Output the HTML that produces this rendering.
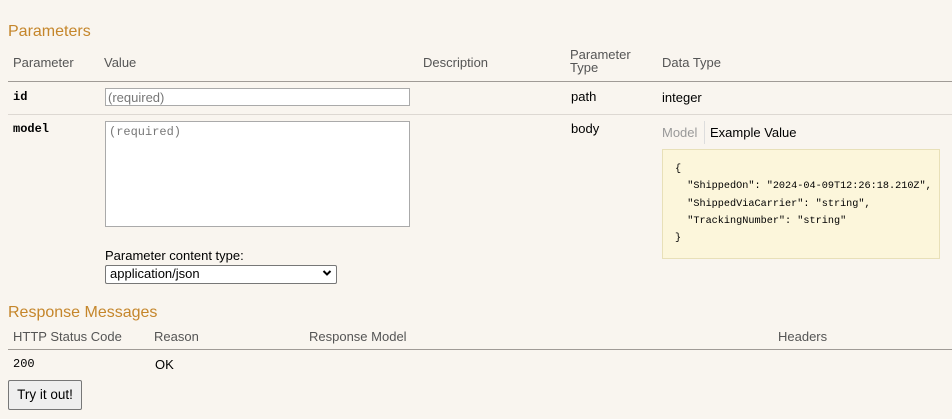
<!DOCTYPE html>
<html><head><style>
body{margin:0;width:952px;height:419px;background:#f9f5ef;font-family:"Liberation Sans",sans-serif;font-size:13px;color:#000;position:relative;overflow:hidden}
.a{position:absolute;white-space:nowrap}
.h{color:#c5862b;font-size:16px}
.th{color:#555;font-size:13px}
.mono{font-family:"Liberation Mono",monospace;font-size:12px}
.line{position:absolute;left:8px;right:0;height:1px}
</style></head><body>
<div class="a h" style="left:8px;top:23px">Parameters</div>
<div class="a th" style="left:13px;top:55px">Parameter</div>
<div class="a th" style="left:104px;top:55px">Value</div>
<div class="a th" style="left:423px;top:55px">Description</div>
<div class="a th" style="left:570px;top:48px;line-height:13px">Parameter<br>Type</div>
<div class="a th" style="left:662px;top:55px">Data Type</div>
<div class="line" style="top:81px;background:#a09b96"></div>

<div class="a mono" style="left:13px;top:90px;font-weight:bold">id</div>
<div class="a" style="left:105px;top:88px;width:303px;height:16px;border:1px solid #aaa;background:#fff"></div>
<div class="a" style="left:108px;top:90px;color:#777">(required)</div>
<div class="a" style="left:571px;top:89px">path</div>
<div class="a" style="left:662px;top:90px">integer</div>
<div class="line" style="top:114px;background:#ddd8d2"></div>

<div class="a mono" style="left:13px;top:122px;font-weight:bold">model</div>
<div class="a" style="left:105px;top:121px;width:303px;height:104px;border:1px solid #aaa;background:#fff"></div>
<div class="a mono" style="left:109px;top:125px;color:#777">(required)</div>
<div class="a" style="left:571px;top:121px">body</div>
<div class="a" style="left:662px;top:125px;color:#999">Model</div>
<div class="a" style="left:704px;top:121px;width:1px;height:23px;background:#ddd"></div>
<div class="a" style="left:710px;top:125px">Example Value</div>
<div class="a" style="left:662px;top:149px;width:276px;height:108px;border:1px solid #e8e0b8;background:#fcf6db"></div>
<pre class="a mono" style="left:675px;top:161px;margin:0;font-size:10.2px;line-height:17.3px;white-space:pre">{
  "ShippedOn": "2024-04-09T12:26:18.210Z",
  "ShippedViaCarrier": "string",
  "TrackingNumber": "string"
}</pre>

<div class="a" style="left:105px;top:248px">Parameter content type:</div>
<div class="a" style="left:105px;top:265px;width:230px;height:17px;border:1px solid #777;border-radius:2px;background:#fff"></div>
<div class="a" style="left:110px;top:266px">application/json</div>
<svg class="a" style="left:322px;top:269px" width="10" height="8" viewBox="0 0 10 8"><path d="M1.5 2 L5 5.5 L8.5 2" stroke="#000" stroke-width="2" fill="none"/></svg>

<div class="a h" style="left:8px;top:304px">Response Messages</div>
<div class="a th" style="left:13px;top:329px">HTTP Status Code</div>
<div class="a th" style="left:154px;top:329px">Reason</div>
<div class="a th" style="left:309px;top:329px">Response Model</div>
<div class="a th" style="left:778px;top:329px">Headers</div>
<div class="line" style="top:349px;background:#a09b96"></div>
<div class="a mono" style="left:13px;top:357px">200</div>
<div class="a" style="left:155px;top:357px">OK</div>
<div class="a" style="left:8px;top:380px;width:72px;height:28px;border:1px solid #777;border-radius:2px;background:#efefef"></div>
<div class="a" style="left:8px;top:387px;width:74px;text-align:center;font-size:13.5px">Try it out!</div>
</body></html>
